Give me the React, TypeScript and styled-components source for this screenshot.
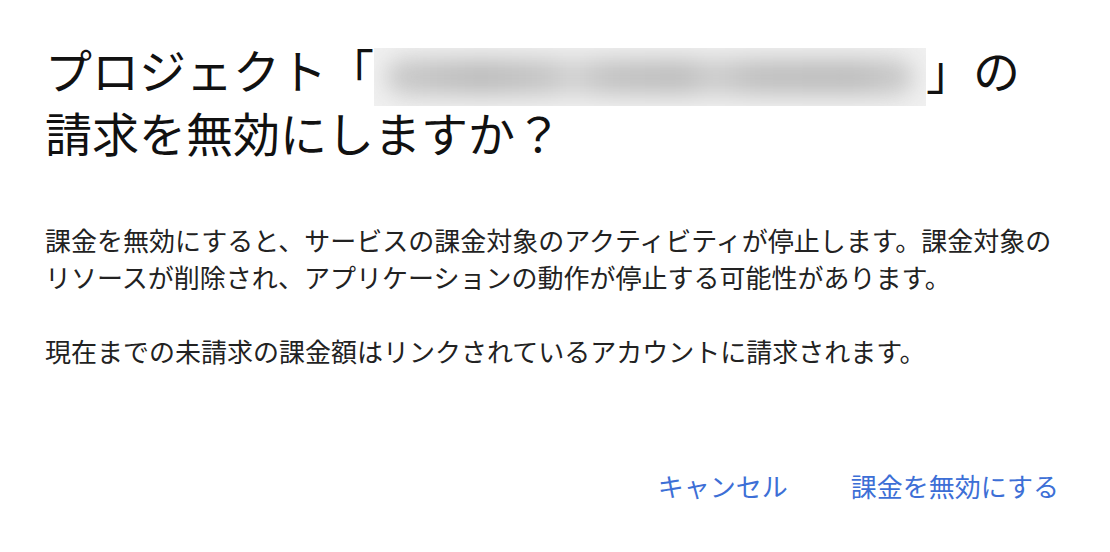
import React from 'react'
import styled, { createGlobalStyle } from 'styled-components'

const GlobalStyle = createGlobalStyle`
  html, body {
    margin: 0;
    padding: 0;
    background: #fff;
  }
  body {
    font-family: "Noto Sans CJK JP", "Noto Sans", sans-serif;
  }
`;

const Dialog = styled.div`
  box-sizing: border-box;
  width: 1110px;
  height: 552px;
  padding: 37px 45px 0;
  background: #fff;
  display: flex;
  flex-direction: column;
`;

const Title = styled.h1`
  margin: 0;
  font-size: 47px;
  line-height: 63px;
  font-weight: 400;
  color: #111;
  letter-spacing: 0;
`;

// project name is blurred out in the screenshot
const Redacted = styled.span`
  display: inline-block;
  width: 552px;
  height: 58px;
  vertical-align: 3px;
  margin: -20px 0;
  background: #f0f0f0;
  overflow: hidden;
`;

const Smudge = styled.span`
  display: block;
  margin: 11px 12px;
  height: 36px;
  border-radius: 18px;
  background: linear-gradient(
    90deg,
    #cacaca 0%,
    #bcbcbc 18%,
    #c6c6c6 31%,
    #d4d4d4 35%,
    #c3c3c3 42%,
    #bebebe 56%,
    #cecece 62%,
    #c0c0c0 70%,
    #bdbdbd 88%,
    #cccccc 100%
  );
  filter: blur(11px);
`;

const Body = styled.div`
  margin-top: 58px;

  p {
    margin: 0 0 37px;
    font-size: 26px;
    line-height: 37px;
    color: #222;

    &:last-child {
      margin-bottom: 0;
    }
  }
`;

const Footer = styled.div`
  margin-top: 90px;
  margin-right: -2px;
  display: flex;
  justify-content: flex-end;
  gap: 47px;
`;

const TextButton = styled.button`
  border: 0;
  background: transparent;
  padding: 8px;
  font-family: inherit;
  font-size: 26px;
  line-height: 38px;
  color: #3d6fd6;
  cursor: pointer;
`;

export default function App() {
  return (
    <>
      <GlobalStyle />
      <Dialog>
        <Title>
          プロジェクト「<Redacted aria-hidden="true"><Smudge /></Redacted>」の
          <br />
          請求を無効にしますか？
        </Title>

        <Body>
          <p>
            課金を無効にすると、サービスの課金対象のアクティビティが停止します。課金対象のリソースが削除され、アプリケーションの動作が停止する可能性があります。
          </p>
          <p>現在までの未請求の課金額はリンクされているアカウントに請求されます。</p>
        </Body>

        <Footer>
          <TextButton>キャンセル</TextButton>
          <TextButton>課金を無効にする</TextButton>
        </Footer>
      </Dialog>
    </>
  )
}
